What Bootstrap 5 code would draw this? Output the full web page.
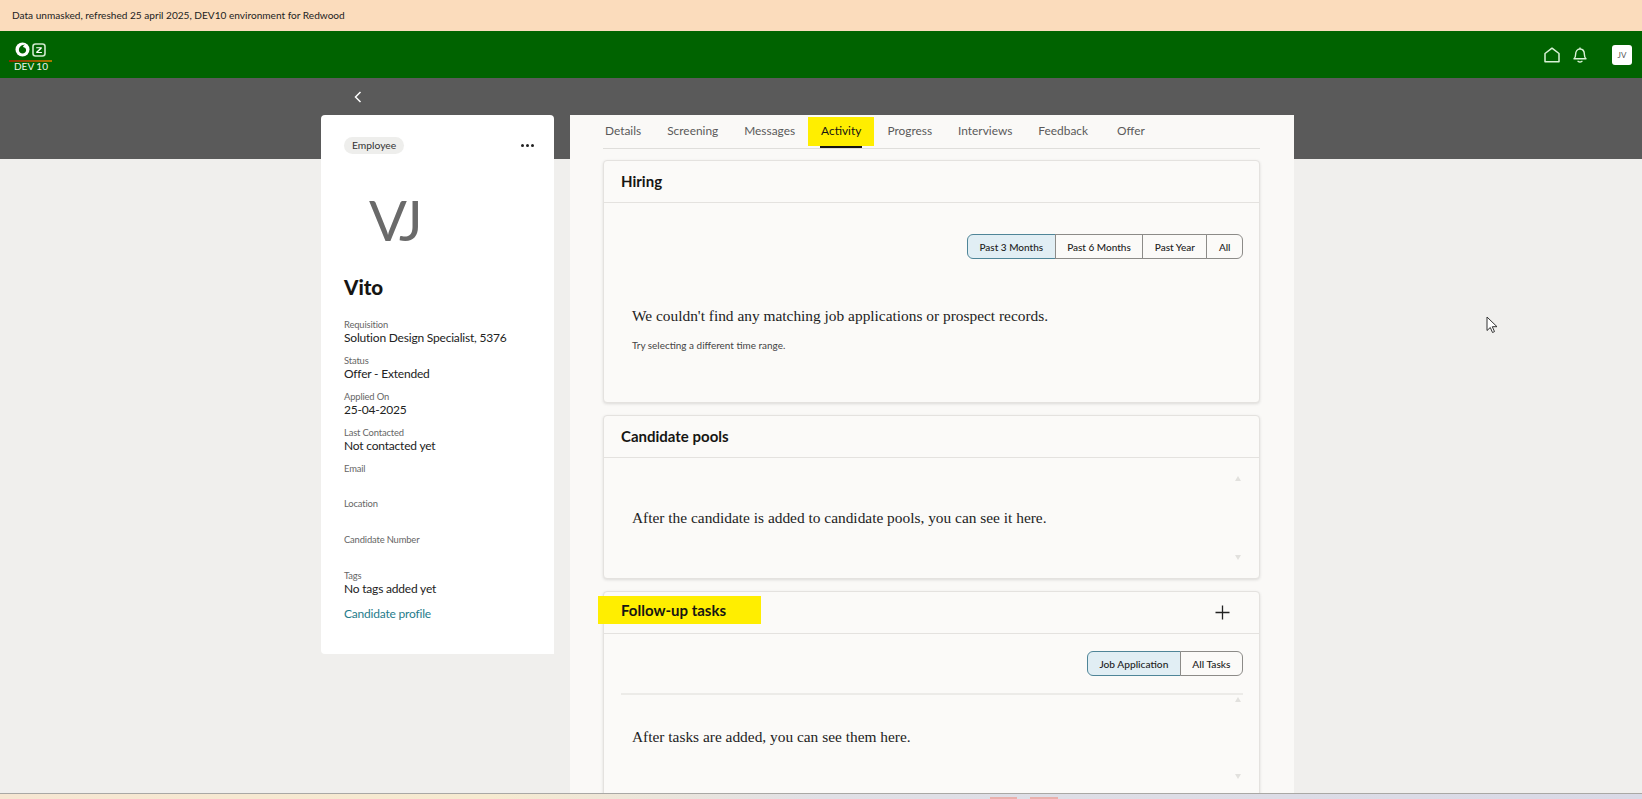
<!DOCTYPE html>
<html lang="en">
<head>
    <meta charset="UTF-8" />
    <meta name="viewport" content="width=device-width, initial-scale=1.0">
    <title>Candidate activity</title>
    <link href="https://cdn.jsdelivr.net/npm/bootstrap@5.3.0/dist/css/bootstrap.min.css" rel="stylesheet">
    <style>
        html, body { height: 100%; }
        body { font-family: Lato, "Liberation Sans", sans-serif; background: #f0efed; color: #222; position: relative; }
        .env-banner { height: 31px; background: #fbdcbc; font-size: 10.1px; padding-left: 12px; color: #222; flex: none; }
        .top-bar { height: 47px; background: #006300; flex: none; padding: 0 10px 0 9px; }
        .logo-box { width: 43px; color: #fff; }
        .logo-icons { height: 19px; padding-left: 6px; gap: 2px; margin-top: 3px; }
        .logo-rule { height: 2px; background: linear-gradient(90deg, #8a2c00, #a87a00); margin-top: 1px; }
        .logo-text { font-size: 10px; line-height: 12px; text-align: center; color: #eef6ea; margin-top: -2px; padding-left: 1px; }
        .avatar-chip { width: 20px; height: 20px; background: #fff; border-radius: 3px; font-size: 8px; color: #555; margin-left: 12px; }
        .top-icons { gap: 13px; }
        .stage { flex: 1 1 0; min-height: 0; overflow: hidden; background: linear-gradient(#5a5a5a 81px, #f0efed 81px); border-bottom: 1px solid #a9a8a5; }
        .back-row { height: 37px; padding: 0 0 0 354px; }
        .stage-cols { padding-left: 321px; gap: 16px; }
        .side-card { width: 233px; height: 539px; background: #fff; border-radius: 4px 4px 0 4px; padding: 22px 20px 0 23px; flex: none; }
        .emp-pill { font-size: 10.3px; background: #eeeeec; color: #333; border-radius: 9px; height: 17px; padding: 0 8px; }
        .dots { font-size: 0; gap: 2px; }
        .dots i { width: 3px; height: 3px; border-radius: 50%; background: #222; display: block; }
        .big-initials { font-size: 56px; line-height: 66px; color: #6a6a6a; margin: 33px 0 0 25px; letter-spacing: -4px; font-weight: 400; }
        .cand-name { font-size: 20.5px; font-weight: 900; color: #161513; line-height: 24px; margin: 22px 0 19px; }
        .info-row { min-height: 35.9px; }
        .info-label { font-size: 9.4px; line-height: 13px; color: #666; letter-spacing: -.15px; }
        .info-value { font-size: 12px; line-height: 15px; color: #222; letter-spacing: -.2px; margin-top: -1px; }
        .cand-link { font-size: 12px; color: #1f7c8c; text-decoration: none; display: block; letter-spacing: -.2px; }
        .main-panel { width: 724px; background: #faf9f7; padding: 0 34px 0 33px; flex: none; height: 700px; }
        .tab-strip { height: 34px; border-bottom: 1px solid #dfdedb; padding-left: 2px; margin-bottom: 11px; }
        .tab-item { font-size: 11.9px; color: #5a5a5a; text-decoration: none; margin-right: 26px; height: 34px; line-height: 31px; position: relative; }
        .tab-on { color: #161513; background: #ffee00; margin: 2px 13px 0 -13px; padding: 0 13px; height: 29px; line-height: 27px; }
        .tab-on::after { content: ""; position: absolute; left: 12px; right: 12px; top: 29px; height: 2px; background: #161513; }
        .offer-tab { margin-left: 3px; }
        .sect-card { background: #fbfaf8; border: 1px solid #e4e2df; border-radius: 4px; box-shadow: 0 1px 3px rgba(0,0,0,.12); margin-bottom: 12px; }
        .sect-card .card-header { background: transparent; border-bottom: 1px solid #e4e2df; height: 42px; padding: 0 17px; font-size: 15px; font-weight: 700; color: #161513; }
        .sect-card .card-body { padding: 0; }
        .seg-btn { font-size: 10px; padding: 0 11.5px; height: 25px; line-height: 20px; color: #222; background: #fbfaf8; border: 1px solid #8c8b88; font-weight: 500; }
        .seg-btn:hover { color: #222; background: #fbfaf8; border-color: #8c8b88; }
        .seg-on, .seg-on:hover { background: #e1eef4; border-color: #4f8598; }
        .tasks-seg .seg-btn { font-size: 10.2px; }
        .msg-serif { font-family: "Liberation Serif", serif; font-size: 15.4px; color: #222; margin: 0; }
        .msg-small { font-size: 9.95px; color: #444; margin: 0; }
        .scroll-track { width: 7px; margin-right: 17px; }
        .tri-up, .tri-down { width: 0; height: 0; border-left: 3px solid transparent; border-right: 3px solid transparent; }
        .tri-up { border-bottom: 5px solid #e2e1de; }
        .tri-down { border-top: 5px solid #e2e1de; }
        .sect-card .hiring-body { height: 199px; padding: 31px 16px 0 28px; }
        .hiring-head { margin-top: 45px; }
        .hiring-sub { margin-top: 11px; }
        .pools-body { height: 120px; }
        .pools-track { padding: 18px 0 18px; }
        .tasks-track { padding: 2px 0 0; }
        .pad-msg { padding-left: 28px; }
        .mark-yellow { background: #ffee00; margin-left: -23px; padding: 0 35px 0 23px; height: 28px; line-height: 28px; margin-top: -5px; }
        .plus-ico { margin-right: 12px; }
        .tasks-seg { padding: 17px 16px 0 0; }
        .tasks-rule { height: 2px; background: #ecebe8; margin: 17px 16px 0 17px; }
        .tasks-area { height: 84px; margin-bottom: 60px; }
        .os-strip { height: 5px; flex: none; background:
            linear-gradient(#e9b0ac, #e9b0ac) 990px 3px / 27px 2px no-repeat,
            linear-gradient(#e9b0ac, #e9b0ac) 1030px 3px / 28px 2px no-repeat,
            linear-gradient(90deg, #f6e6d2 0%, #f6ead0 30%, #e0e0e6 50%, #d9d9e6 100%); }
        .mouse-arrow { position: absolute; left: 1486px; top: 316px; }
    </style>
</head>
<body class="d-flex flex-column overflow-hidden">

    <div class="env-banner d-flex align-items-center">Data unmasked, refreshed 25 april 2025, DEV10 environment for Redwood</div>

    <nav class="top-bar d-flex align-items-center justify-content-between">
        <div class="logo-box">
            <div class="logo-icons d-flex align-items-center">
                <svg width="15" height="15" viewBox="0 0 15 15"><circle cx="7.5" cy="7.500" r="7" fill="#fff"/><path d="M9.100 2.800C6.100 3.200 3.900 5.300 3.900 8.100c0 2 1.600 3.500 3.600 3.500s3.600-1.500 3.600-3.300c0-1.800-1.200-2.900-3-3.300 0-.7.3-1.500 2-2.200z" fill="#006300"/></svg>
                <svg width="14" height="14" viewBox="0 0 14 14"><rect x="1" y="1" width="12" height="12" rx="2.500" fill="none" stroke="#cfe8cc" stroke-width="1.600"/><path d="M4.200 4.200h5.600v1.200L6 9h3.900v1H4.200V8.800L8 5.200H4.200z" fill="#fff"/></svg>
            </div>
            <div class="logo-rule"></div>
            <div class="logo-text">DEV 10</div>
        </div>
        <div class="d-flex align-items-center top-icons">
            <svg width="16" height="16" viewBox="0 0 16 16" fill="none" stroke="#d9f2d6" stroke-width="1.500"><path d="M1 14.700V6.500L8 1.200l7 5.300v8.200z" stroke-linejoin="round"/></svg>
            <svg width="14" height="16" viewBox="0 0 14 16" fill="none" stroke="#d9f2d6" stroke-width="1.400"><path d="M1 11.800h12c-1.200-1-1.600-2.200-1.600-4.300C11.400 4.500 9.800 2 7 2S2.600 4.500 2.600 7.500c0 2.100-.4 3.300-1.600 4.300z" stroke-linejoin="round"/><path d="M5 14.300c1.200.9 2.800.9 4 0" stroke-linecap="round"/><path d="M7 .5V2"/></svg>
            <div class="avatar-chip d-flex align-items-center justify-content-center">JV</div>
        </div>
    </nav>

    <div class="stage">
        <div class="back-row d-flex align-items-center">
            <svg width="8" height="12" viewBox="0 0 8 12" fill="none" stroke="#fff" stroke-width="1.500"><path d="M6.500 1L1.500 6l5 5"/></svg>
        </div>
        <div class="stage-cols d-flex align-items-start">
            <aside class="side-card">
                <div class="d-flex justify-content-between align-items-center">
                    <span class="emp-pill d-inline-flex align-items-center">Employee</span>
                    <span class="dots d-flex"><i></i><i></i><i></i></span>
                </div>
                <div class="big-initials">VJ</div>
                <div class="cand-name">Vito</div>
                <div class="info-row"><div class="info-label">Requisition</div><div class="info-value">Solution Design Specialist, 5376</div></div>
                <div class="info-row"><div class="info-label">Status</div><div class="info-value">Offer - Extended</div></div>
                <div class="info-row"><div class="info-label">Applied On</div><div class="info-value">25-04-2025</div></div>
                <div class="info-row"><div class="info-label">Last Contacted</div><div class="info-value">Not contacted yet</div></div>
                <div class="info-row"><div class="info-label">Email</div></div>
                <div class="info-row"><div class="info-label">Location</div></div>
                <div class="info-row"><div class="info-label">Candidate Number</div></div>
                <div class="info-row"><div class="info-label">Tags</div><div class="info-value">No tags added yet</div></div>
                <a class="cand-link" href="#">Candidate profile</a>
            </aside>

            <main class="main-panel">
                <div class="tab-strip d-flex align-items-start">
                    <a class="tab-item" href="#">Details</a>
                    <a class="tab-item" href="#">Screening</a>
                    <a class="tab-item" href="#">Messages</a>
                    <a class="tab-item tab-on" href="#">Activity</a>
                    <a class="tab-item" href="#">Progress</a>
                    <a class="tab-item" href="#">Interviews</a>
                    <a class="tab-item" href="#">Feedback</a>
                    <a class="tab-item offer-tab" href="#">Offer</a>
                </div>

                <section class="card sect-card">
                    <div class="card-header d-flex align-items-center">Hiring</div>
                    <div class="card-body hiring-body">
                        <div class="d-flex justify-content-end">
                            <div class="btn-group">
                                <button class="btn seg-btn seg-on">Past 3 Months</button>
                                <button class="btn seg-btn">Past 6 Months</button>
                                <button class="btn seg-btn">Past Year</button>
                                <button class="btn seg-btn">All</button>
                            </div>
                        </div>
                        <p class="msg-serif hiring-head">We couldn't find any matching job applications or prospect records.</p>
                        <p class="msg-small hiring-sub">Try selecting a different time range.</p>
                    </div>
                </section>

                <section class="card sect-card">
                    <div class="card-header d-flex align-items-center">Candidate pools</div>
                    <div class="card-body pools-body d-flex align-items-center justify-content-between">
                        <p class="msg-serif pad-msg">After the candidate is added to candidate pools, you can see it here.</p>
                        <div class="scroll-track pools-track align-self-stretch d-flex flex-column justify-content-between"><div class="tri-up"></div><div class="tri-down"></div></div>
                    </div>
                </section>

                <section class="card sect-card">
                    <div class="card-header d-flex align-items-center justify-content-between">
                        <span class="mark-yellow">Follow-up tasks</span>
                        <svg class="plus-ico" width="15" height="15" viewBox="0 0 15 15" stroke="#222" stroke-width="1.300"><path d="M7.500 .5v14M.5 7.500h14"/></svg>
                    </div>
                    <div class="card-body">
                        <div class="tasks-seg d-flex justify-content-end">
                            <div class="btn-group">
                                <button class="btn seg-btn seg-on">Job Application</button>
                                <button class="btn seg-btn">All Tasks</button>
                            </div>
                        </div>
                        <div class="tasks-rule"></div>
                        <div class="tasks-area d-flex align-items-center justify-content-between">
                            <p class="msg-serif pad-msg">After tasks are added, you can see them here.</p>
                            <div class="scroll-track tasks-track align-self-stretch d-flex flex-column justify-content-between"><div class="tri-up"></div><div class="tri-down"></div></div>
                        </div>
                    </div>
                </section>
            </main>
        </div>
    </div>

    <div class="os-strip"></div>

    <svg class="mouse-arrow" width="12" height="18" viewBox="0 0 12 18"><path d="M1 1v13.500l3.300-3 2.200 5 2-.9-2.200-4.900H11z" fill="#fff" stroke="#333" stroke-width="1"/></svg>

    <script src="https://cdn.jsdelivr.net/npm/bootstrap@5.3.0/dist/js/bootstrap.bundle.min.js"></script>
</body>
</html>
